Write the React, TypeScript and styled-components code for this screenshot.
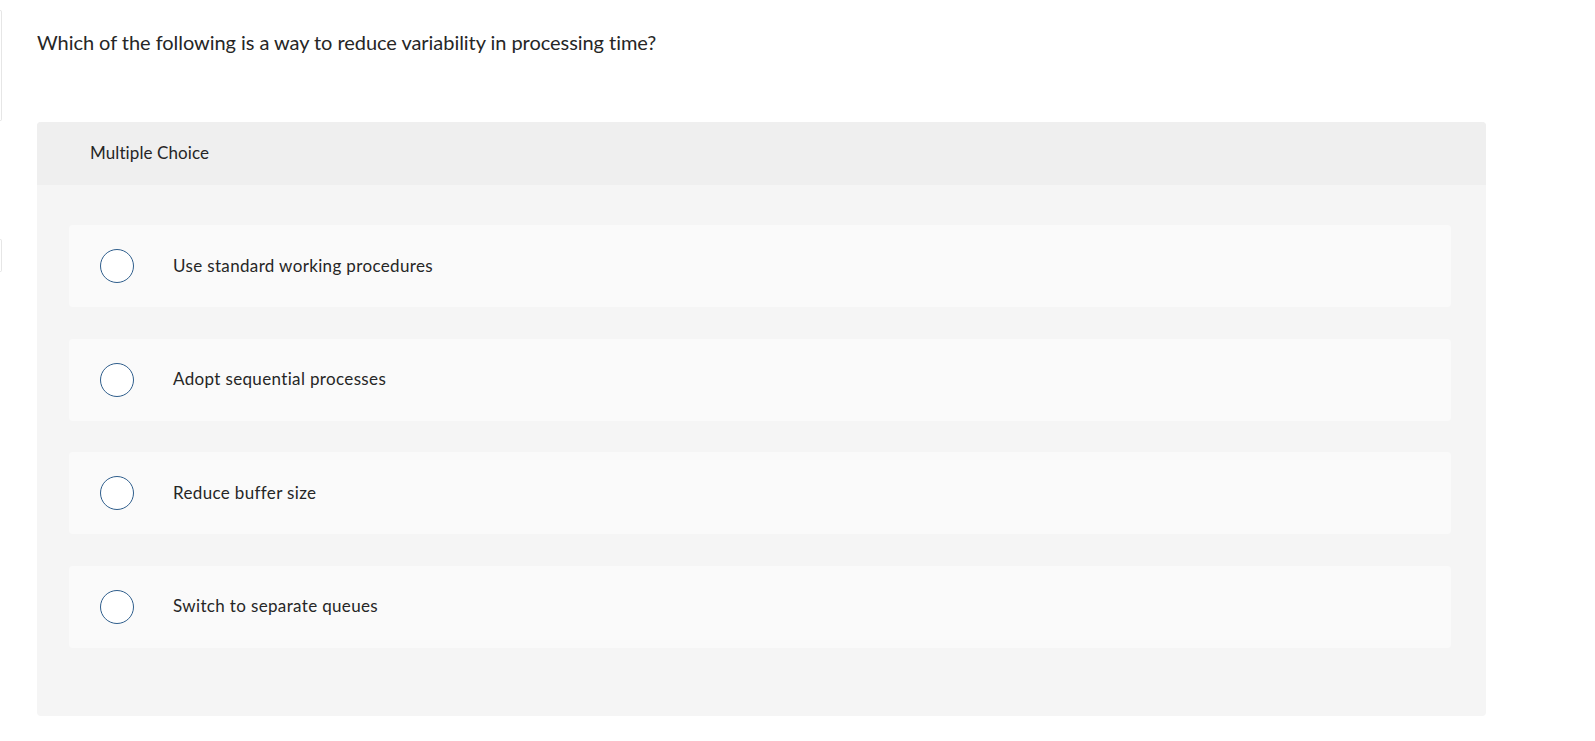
import styled, { createGlobalStyle } from "styled-components";

const GlobalStyle = createGlobalStyle`
    html, body {
        margin: 0;
        padding: 0;
        background: #ffffff;
    }

    body {
        font-family: Lato, "Open Sans", Arial, sans-serif;
        color: #262626;
    }
`;

const Page = styled.div`
    display: flex;
    align-items: flex-start;
    min-height: 741px;
`;

const Rail = styled.div`
    display: flex;
    flex-direction: column;
    width: 2px;
    flex-shrink: 0;
    padding-top: 10px;
`;

const RailTab = styled.div<{ $height: number; $gap: number }>`
    height: ${(p) => p.$height}px;
    margin-bottom: ${(p) => p.$gap}px;
    border: 1px solid #e6e6e6;
    border-left: none;
    border-radius: 0 4px 4px 0;
    background: #ffffff;
`;

const Main = styled.main`
    flex: 1;
    padding: 28px 0 0 35px;
`;

const Question = styled.p`
    margin: 0;
    font-size: 20px;
    line-height: 28px;
    letter-spacing: -0.05px;
    color: #262626;
`;

const Panel = styled.section`
    width: 1449px;
    margin-top: 66px;
    border-radius: 4px;
    overflow: hidden;
    background: #f5f5f5;
`;

const PanelHeader = styled.header`
    display: flex;
    align-items: center;
    height: 63px;
    box-sizing: border-box;
    padding: 0 0 2px 53px;
    background: #efefef;
    font-size: 17px;
    letter-spacing: 0.1px;
    color: #262626;
`;

const Choices = styled.div`
    display: flex;
    flex-direction: column;
    gap: 31.5px;
    padding: 40px 35px 68px 32px;
`;

const Choice = styled.label`
    display: flex;
    align-items: center;
    height: 82px;
    padding-left: 31px;
    border-radius: 4px;
    background: #fafafa;
    cursor: pointer;
`;

const Radio = styled.span`
    width: 34px;
    height: 34px;
    box-sizing: border-box;
    flex-shrink: 0;
    border: 1.5px solid #2f5e8c;
    border-radius: 50%;
    background: #ffffff;
`;

const ChoiceText = styled.span`
    margin-left: 39px;
    padding-bottom: 2px;
    font-size: 17px;
    letter-spacing: 0.35px;
    color: #262626;
`;

const options = [
    "Use standard working procedures",
    "Adopt sequential processes",
    "Reduce buffer size",
    "Switch to separate queues",
];

export default function App() {
    return (
        <>
            <GlobalStyle />
            <Page>
                <Rail>
                    <RailTab $height={109} $gap={118} />
                    <RailTab $height={31} $gap={0} />
                </Rail>
                <Main>
                    <Question>
                        Which of the following is a way to reduce variability in
                        processing time?
                    </Question>
                    <Panel>
                        <PanelHeader>Multiple Choice</PanelHeader>
                        <Choices>
                            {options.map((text) => (
                                <Choice key={text}>
                                    <Radio />
                                    <ChoiceText>{text}</ChoiceText>
                                </Choice>
                            ))}
                        </Choices>
                    </Panel>
                </Main>
            </Page>
        </>
    );
}
